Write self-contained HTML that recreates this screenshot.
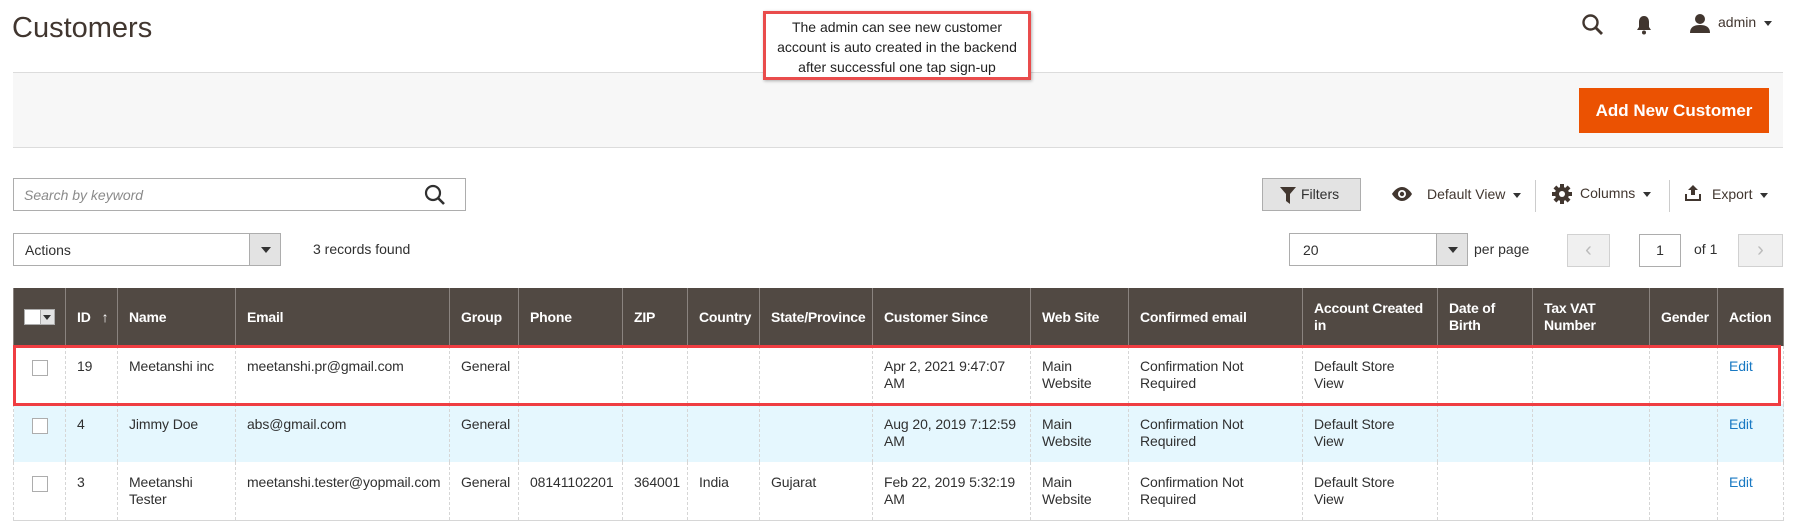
<!DOCTYPE html>
<html><head><meta charset="utf-8">
<style>
*{box-sizing:border-box;margin:0;padding:0}
body{width:1793px;height:529px;background:#fff;font-family:"Liberation Sans",sans-serif;color:#303030;position:relative;overflow:hidden;font-size:14px}
.a{position:absolute}
.title{left:12px;top:12px;font-size:29px;color:#41362f}
.note{left:763px;top:11px;width:268px;height:69px;border:3px solid #e94c4c;background:#fff;text-align:center;font-size:14px;line-height:20px;padding-top:3px;color:#222;box-shadow:1px 1px 3px rgba(0,0,0,.3);z-index:3}
.bar{left:13px;top:72px;width:1770px;height:76px;background:#f7f7f7;border-top:1px solid #dcdcdc;border-bottom:1px solid #dcdcdc}
.btn{left:1579px;top:88px;width:190px;height:45px;background:#eb5202;color:#fff;font-weight:bold;font-size:17px;text-align:center;line-height:45px}
.sbox{left:13px;top:178px;width:453px;height:33px;border:1px solid #adadad;font-style:italic;color:#8a8a8a;padding:8px 10px;font-size:14px}
.filters{left:1262px;top:178px;width:99px;height:33px;background:#e3e3e3;border:1px solid #adadad;font-size:14px;line-height:31px;padding-left:38px;color:#303030}
.sel{border:1px solid #adadad;height:33px;background:#fff}
.sel .ar{position:absolute;right:0;top:0;width:31px;height:31px;background:#e3e3e3;border-left:1px solid #adadad}
.sel .ar:after{content:"";position:absolute;left:11px;top:13px;border-left:5px solid transparent;border-right:5px solid transparent;border-top:6px solid #333}
.tri{display:inline-block;border-left:4px solid transparent;border-right:4px solid transparent;border-top:5px solid #333;vertical-align:middle;margin-left:8px}
.pg{background:#f0f0f0;border:1px solid #d1d1d1;height:33px;color:#bbb;text-align:center;line-height:31px;font-size:20px}
table{position:absolute;left:13px;top:288px;border-collapse:collapse;table-layout:fixed;width:1770px}
th{background:#514943;color:#fff;font-weight:bold;font-size:14px;text-align:left;height:58px;padding:0 11px;border-left:1px solid #8a837f;border-right:1px solid #8a837f;line-height:17px;vertical-align:middle;letter-spacing:-0.2px}
td{vertical-align:top;padding:12px 11px 0;height:58px;line-height:17px;border-left:1px dashed #d6d6d6;border-right:1px dashed #d6d6d6;font-size:14px;color:#303030;letter-spacing:-0.1px}
tr.alt td{background:#e5f7fe}
tr:last-child td{border-bottom:1px solid #d6d6d6}
.cb{width:16px;height:16px;border:1px solid #adadad;background:#fff;margin:2px 0 0 7px}
a{color:#1979c3;text-decoration:none}
.red{left:13px;top:345px;width:1768px;height:61px;border:3px solid #ef3d42;z-index:2;pointer-events:none}
.lbl{font-size:14px;color:#41362f}
</style></head><body>
<div class="a title">Customers</div>
<div class="a note">The admin can see new customer<br>account is auto created in the backend<br>after successful one tap sign-up</div>

<svg class="a" style="left:1581px;top:13px" width="24" height="24" viewBox="0 0 24 24"><circle cx="9.5" cy="9.5" r="7" fill="none" stroke="#41362f" stroke-width="2.4"/><line x1="14.5" y1="14.5" x2="21" y2="21" stroke="#41362f" stroke-width="2.8"/></svg>
<svg class="a" style="left:1636px;top:15px" width="16" height="20" viewBox="0 0 16 20"><path d="M8 1c-3.5 0-5 3-5 6v5l-2 3h14l-2-3V7c0-3-1.5-6-5-6z" fill="#41362f"/><circle cx="8" cy="17.5" r="2" fill="#41362f"/></svg>
<svg class="a" style="left:1689px;top:13px" width="22" height="20" viewBox="0 0 22 20"><circle cx="11" cy="6" r="5" fill="#41362f"/><path d="M1 20c0-6 4-8 10-8s10 2 10 8z" fill="#41362f"/></svg>
<div class="a" style="left:1718px;top:14px;font-size:14px;color:#41362f">admin<span class="tri"></span></div>

<div class="a bar"></div>
<div class="a btn">Add New Customer</div>

<div class="a sbox">Search by keyword</div>
<svg class="a" style="left:424px;top:184px" width="22" height="22" viewBox="0 0 22 22"><circle cx="9" cy="9" r="7" fill="none" stroke="#303030" stroke-width="2.2"/><line x1="14" y1="14" x2="20" y2="20" stroke="#303030" stroke-width="2.6"/></svg>

<div class="a filters">Filters</div>
<svg class="a" style="left:1280px;top:187px" width="16" height="17" viewBox="0 0 16 17"><path d="M0 0h16L10 7v10l-4-3V7z" fill="#41362f"/></svg>
<svg class="a" style="left:1390px;top:186px" width="24" height="16" viewBox="0 0 24 16"><path d="M12 1C6 1 2 8 2 8s4 7 10 7 10-7 10-7S18 1 12 1z" fill="#41362f"/><circle cx="12" cy="8" r="4" fill="#fff"/><circle cx="12" cy="8" r="2.2" fill="#41362f"/></svg>
<div class="a lbl" style="left:1427px;top:186px">Default View<span class="tri"></span></div>
<div class="a" style="left:1535px;top:180px;width:1px;height:32px;background:#ccc"></div>
<svg class="a" style="left:1552px;top:184px" width="20" height="20" viewBox="0 0 20 20"><g fill="#41362f"><circle cx="10" cy="10" r="7"/><rect x="8" y="0" width="4" height="20"/><rect x="0" y="8" width="20" height="4"/><rect x="8" y="0" width="4" height="20" transform="rotate(45 10 10)"/><rect x="8" y="0" width="4" height="20" transform="rotate(-45 10 10)"/></g><circle cx="10" cy="10" r="3" fill="#fff"/></svg>
<div class="a lbl" style="left:1580px;top:185px">Columns<span class="tri"></span></div>
<div class="a" style="left:1669px;top:180px;width:1px;height:32px;background:#ccc"></div>
<svg class="a" style="left:1684px;top:185px" width="18" height="17" viewBox="0 0 18 17"><path d="M9 0l5 5h-3v5H7V5H4z" fill="#41362f"/><path d="M1 9v7h16V9h-2v5H3V9z" fill="#41362f"/></svg>
<div class="a lbl" style="left:1712px;top:186px">Export<span class="tri"></span></div>

<div class="a sel" style="left:13px;top:233px;width:268px"><span style="position:absolute;left:11px;top:8px;font-size:14px">Actions</span><div class="ar"></div></div>
<div class="a" style="left:313px;top:241px;font-size:14px">3 records found</div>

<div class="a sel" style="left:1289px;top:233px;width:179px"><span style="position:absolute;left:13px;top:8px;font-size:14px">20</span><div class="ar"></div></div>
<div class="a" style="left:1474px;top:241px;font-size:14px">per page</div>
<div class="a pg" style="left:1567px;top:234px;width:43px">&#8249;</div>
<div class="a" style="left:1639px;top:234px;width:42px;height:33px;border:1px solid #adadad;text-align:center;line-height:31px;font-size:14px">1</div>
<div class="a" style="left:1694px;top:241px;font-size:14px">of 1</div>
<div class="a pg" style="left:1738px;top:234px;width:45px">&#8250;</div>

<table>
<colgroup><col style="width:52px"><col style="width:52px"><col style="width:118px"><col style="width:214px"><col style="width:69px"><col style="width:104px"><col style="width:65px"><col style="width:72px"><col style="width:113px"><col style="width:158px"><col style="width:98px"><col style="width:174px"><col style="width:135px"><col style="width:95px"><col style="width:117px"><col style="width:68px"><col style="width:66px"></colgroup>
<tr><th style="padding:0 10px"><div style="width:31px;height:16px;border:1px solid #adadad;background:#fff;position:relative"><div style="position:absolute;right:0;top:0;width:14px;height:14px;background:#e3e3e3;border-left:1px solid #adadad"></div><div style="position:absolute;right:3px;top:5px;border-left:4px solid transparent;border-right:4px solid transparent;border-top:5px solid #333"></div></div></th>
<th>ID&nbsp;&nbsp;&nbsp;<span style="font-weight:normal">&#8593;</span></th><th>Name</th><th>Email</th><th>Group</th><th>Phone</th><th>ZIP</th><th>Country</th><th>State/Province</th><th>Customer Since</th><th>Web Site</th><th>Confirmed email</th><th>Account Created in</th><th>Date of Birth</th><th>Tax VAT Number</th><th>Gender</th><th>Action</th></tr>
<tr><td style="padding-left:11px"><div class="cb"></div></td><td>19</td><td>Meetanshi inc</td><td>meetanshi.pr@gmail.com</td><td>General</td><td></td><td></td><td></td><td></td><td>Apr 2, 2021 9:47:07 AM</td><td>Main Website</td><td>Confirmation Not Required</td><td>Default Store View</td><td></td><td></td><td></td><td><a>Edit</a></td></tr>
<tr class="alt"><td style="padding-left:11px"><div class="cb"></div></td><td>4</td><td>Jimmy Doe</td><td>abs@gmail.com</td><td>General</td><td></td><td></td><td></td><td></td><td>Aug 20, 2019 7:12:59 AM</td><td>Main Website</td><td>Confirmation Not Required</td><td>Default Store View</td><td></td><td></td><td></td><td><a>Edit</a></td></tr>
<tr><td style="padding-left:11px"><div class="cb"></div></td><td>3</td><td>Meetanshi Tester</td><td>meetanshi.tester@yopmail.com</td><td>General</td><td>08141102201</td><td>364001</td><td>India</td><td>Gujarat</td><td>Feb 22, 2019 5:32:19 AM</td><td>Main Website</td><td>Confirmation Not Required</td><td>Default Store View</td><td></td><td></td><td></td><td><a>Edit</a></td></tr>
</table>
<div class="a red"></div>
</body></html>
